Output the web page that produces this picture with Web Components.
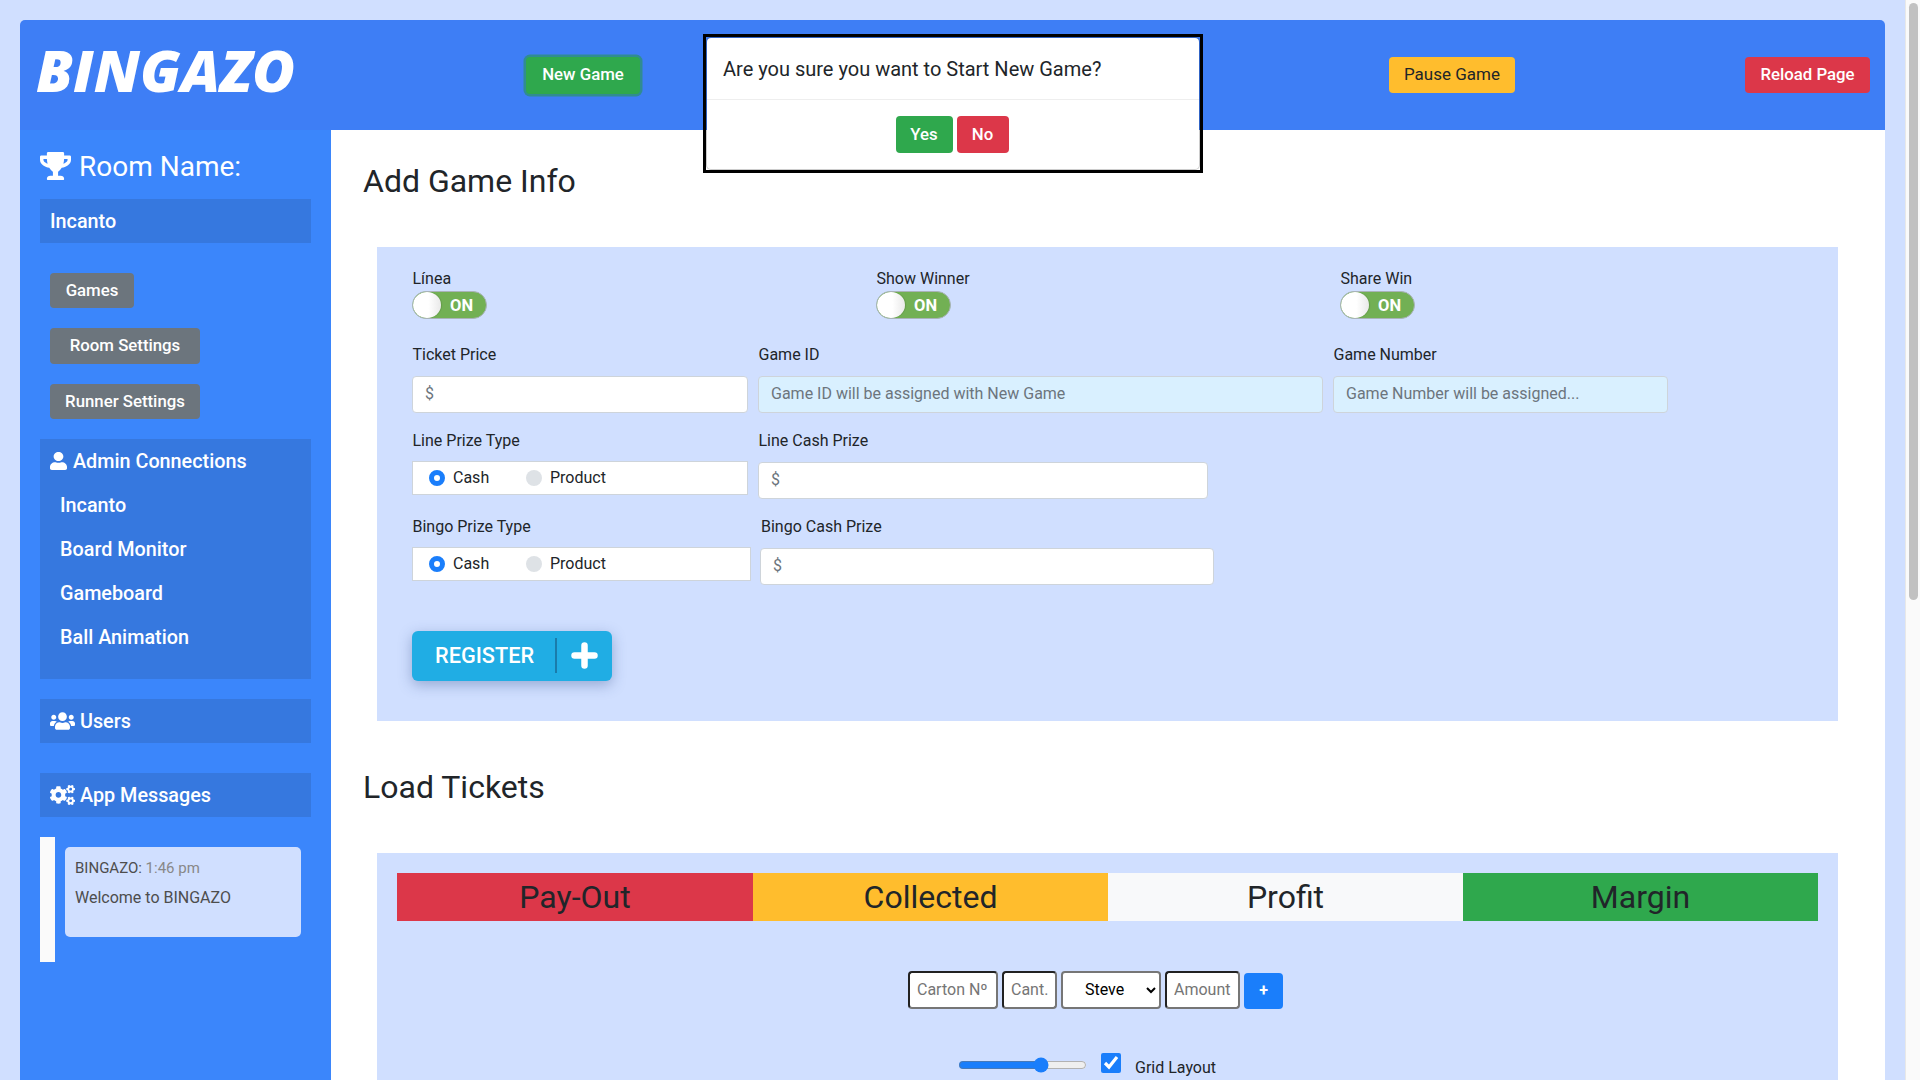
<!DOCTYPE html>
<html lang="en">
<head>
<meta charset="utf-8">
<title>BINGAZO</title>
<style>
html,body{margin:0;height:1080px;overflow:hidden;background:#d0dfff;font-family:Roboto,"Liberation Sans",sans-serif;color:#212529}
</style>
<script>
const def=(name,css,html,setup)=>customElements.define(name,class extends HTMLElement{
  constructor(){super();this.attachShadow({mode:'open'}).innerHTML=`<style>${css}</style>${html}`;}
  connectedCallback(){if(setup)setup(this);}
});
const ICONS={
 trophy:['0 0 576 512','M552 64H448V24c0-13.3-10.7-24-24-24H152c-13.3 0-24 10.7-24 24v40H24C10.7 64 0 74.7 0 88v56c0 35.7 22.5 72.4 61.9 100.7 31.5 22.7 69.8 37.1 110 41.7C203.3 338.5 240 360 240 360v72h-48c-35.3 0-64 20.7-64 56v12c0 6.6 5.4 12 12 12h296c6.6 0 12-5.4 12-12v-12c0-35.3-28.7-56-64-56h-48v-72s36.7-21.5 68.1-73.6c40.3-4.6 78.7-19 110-41.7 39.3-28.3 61.9-65 61.9-100.7V88c0-13.3-10.7-24-24-24zM99.3 192.8C74.9 175.2 64 155.6 64 144v-16h64.2c1 32.6 5.8 61.2 12.8 86.2-15.1-5.2-29.2-12.4-41.7-21.4zM512 144c0 16.1-17.7 36.1-35.3 48.8-12.5 9-26.7 16.2-41.8 21.4 7-25 11.8-53.6 12.8-86.2H512v16z'],
 user:['0 0 448 512','M224 256c70.7 0 128-57.3 128-128S294.7 0 224 0 96 57.3 96 128s57.3 128 128 128zm89.6 32h-16.7c-22.2 10.2-46.9 16-72.9 16s-50.6-5.8-72.9-16h-16.7C60.2 288 0 348.2 0 422.4V464c0 26.5 21.5 48 48 48h352c26.5 0 48-21.5 48-48v-41.6c0-74.2-60.2-134.4-134.4-134.4z'],
 users:['0 0 640 512','M96 224c35.3 0 64-28.7 64-64s-28.7-64-64-64-64 28.7-64 64 28.7 64 64 64zm448 0c35.3 0 64-28.7 64-64s-28.7-64-64-64-64 28.7-64 64 28.7 64 64 64zm32 32h-64c-17.6 0-33.5 7.1-45.1 18.6 40.3 22.1 68.9 62 75.1 109.4h66c17.7 0 32-14.3 32-32v-32c0-35.3-28.7-64-64-64zm-256 0c61.9 0 112-50.1 112-112S381.9 32 320 32 208 82.1 208 144s50.1 112 112 112zm76.8 32h-8.3c-20.8 10-43.9 16-68.5 16s-47.6-6-68.5-16h-8.3C179.6 288 128 339.6 128 403.2V432c0 26.5 21.5 48 48 48h288c26.5 0 48-21.5 48-48v-28.8c0-63.6-51.6-115.2-115.2-115.2zm-223.7-13.4C161.5 263.1 145.6 256 128 256H64c-35.3 0-64 28.7-64 64v32c0 17.7 14.3 32 32 32h65.9c6.3-47.4 34.9-87.3 75.2-109.4z'],
 cogs:['0 0 640 512','M512.1 191l-8.2 14.3c-3 5.3-9.4 7.5-15.1 5.4-11.8-4.4-22.6-10.7-32.1-18.6-4.6-3.8-5.8-10.5-2.8-15.7l8.2-14.3c-6.9-8-12.3-17.3-15.9-27.4h-16.5c-6 0-11.2-4.3-12.2-10.3-2-12-2.1-24.6 0-37.1 1-6 6.2-10.4 12.2-10.4h16.5c3.6-10.1 9-19.4 15.9-27.4l-8.2-14.3c-3-5.2-1.9-11.9 2.8-15.7 9.5-7.9 20.4-14.2 32.1-18.6 5.7-2.1 12.1.1 15.1 5.4l8.2 14.3c10.5-1.9 21.2-1.9 31.7 0L552 6.3c3-5.3 9.4-7.5 15.1-5.4 11.8 4.4 22.6 10.7 32.1 18.6 4.6 3.8 5.8 10.5 2.8 15.7l-8.2 14.3c6.9 8 12.3 17.3 15.9 27.4h16.5c6 0 11.2 4.3 12.2 10.3 2 12 2.1 24.6 0 37.1-1 6-6.2 10.4-12.2 10.4h-16.5c-3.6 10.1-9 19.4-15.9 27.4l8.2 14.3c3 5.2 1.9 11.9-2.8 15.7-9.5 7.9-20.4 14.2-32.1 18.6-5.7 2.1-12.1-.1-15.1-5.4l-8.2-14.3c-10.4 1.9-21.2 1.9-31.7 0zm-10.5-58.8c38.5 29.6 82.4-14.3 52.8-52.8-38.5-29.7-82.4 14.3-52.8 52.8zM386.3 286.1l33.7 16.8c10.1 5.8 14.5 18.1 10.5 29.1-8.9 24.2-26.4 46.4-42.6 65.8-7.4 8.9-20.2 11.1-30.3 5.3l-29.1-16.8c-16 13.7-34.6 24.6-54.9 31.7v33.6c0 11.6-8.3 21.6-19.7 23.6-24.6 4.2-50.4 4.4-75.9 0-11.5-2-20-11.9-20-23.6V418c-20.3-7.2-38.9-18-54.9-31.7L74 403c-10 5.8-22.9 3.6-30.3-5.3-16.2-19.4-33.3-41.6-42.2-65.7-4-10.9.4-23.2 10.5-29.1l33.3-16.8c-3.9-20.9-3.9-42.4 0-63.4L12 205.8c-10.1-5.8-14.6-18.1-10.5-29 8.9-24.2 26-46.4 42.2-65.8 7.4-8.9 20.2-11.1 30.3-5.3l29.1 16.8c16-13.7 34.6-24.6 54.9-31.7V57.1c0-11.5 8.2-21.5 19.6-23.5 24.6-4.2 50.5-4.4 76-.1 11.5 2 20 11.9 20 23.6v33.6c20.3 7.2 38.9 18 54.9 31.7l29.1-16.8c10-5.8 22.9-3.6 30.3 5.3 16.2 19.4 33.2 41.6 42.1 65.8 4 10.9.1 23.2-10 29.1l-33.7 16.8c3.9 21 3.9 42.5 0 63.5zm-117.6 21.1c59.2-77-28.7-164.9-105.7-105.7-59.2 77 28.7 164.9 105.7 105.7zm243.4 182.7l-8.2 14.3c-3 5.3-9.4 7.5-15.1 5.4-11.8-4.4-22.6-10.7-32.1-18.6-4.6-3.8-5.8-10.5-2.8-15.7l8.2-14.3c-6.9-8-12.3-17.3-15.9-27.4h-16.5c-6 0-11.2-4.3-12.2-10.3-2-12-2.1-24.6 0-37.1 1-6 6.2-10.4 12.2-10.4h16.5c3.6-10.1 9-19.4 15.9-27.4l-8.2-14.3c-3-5.2-1.9-11.9 2.8-15.7 9.5-7.9 20.4-14.2 32.1-18.6 5.7-2.1 12.1.1 15.1 5.4l8.2 14.3c10.5-1.9 21.2-1.9 31.7 0l8.2-14.3c3-5.3 9.4-7.5 15.1-5.4 11.8 4.4 22.6 10.7 32.1 18.6 4.6 3.8 5.8 10.5 2.8 15.7l-8.2 14.3c6.9 8 12.3 17.3 15.9 27.4h16.5c6 0 11.2 4.3 12.2 10.3 2 12 2.1 24.6 0 37.1-1 6-6.2 10.4-12.2 10.4h-16.5c-3.6 10.1-9 19.4-15.9 27.4l8.2 14.3c3 5.2 1.9 11.9-2.8 15.7-9.5 7.9-20.4 14.2-32.1 18.6-5.7 2.1-12.1-.1-15.1-5.4l-8.2-14.3c-10.4 1.9-21.2 1.9-31.7 0zM501.6 431c38.5 29.6 82.4-14.3 52.8-52.8-38.5-29.6-82.4 14.3-52.8 52.8z']
};
def('bz-icon',':host{display:inline-flex}svg{width:100%;height:100%;fill:currentColor;display:block}','',el=>{
  const [vb,d]=ICONS[el.getAttribute('name')];
  const s=el.shadowRoot; if(s.querySelector('svg'))return;
  s.innerHTML+=`<svg viewBox="${vb}" preserveAspectRatio="none" aria-hidden="true"><path d="${d}"/></svg>`;
});
def('bz-btn',`:host{display:inline-flex;align-items:center;justify-content:center;box-sizing:border-box;height:36px;padding-bottom:2px;border-radius:4px;color:#fff;font-size:16.8px;font-weight:500;white-space:nowrap}
:host([v=green]){background:#2fa84d}
:host([v=red]){background:#dc3749}
:host([v=yellow]){background:#ffbd2d;color:#212529;font-weight:400;font-size:17px}
:host([v=gray]){background:#6c757d}
:host([v=blue]){background:#1a7efb;font-weight:700;font-size:16px}
:host([focus]){height:37px;padding-bottom:4px;box-shadow:0 0 0 2.5px rgba(40,150,80,.6)}`,'<slot></slot>');
def('bz-app',`:host{display:block;box-sizing:border-box;width:1905px;height:1080px;padding:20px 20px 0;overflow:hidden}
.shell{display:grid;grid-template-columns:311px 1fr;grid-template-rows:110px 950px;width:1865px}
.top{grid-column:1/3;background:#3e7ef5;border-radius:5px 5px 0 0}
.side{background:#3b86fb}.main{background:#fff}`,
`<div class="shell"><div class="top"><slot name="header"></slot></div><div class="side"><slot name="side"></slot></div><div class="main"><slot name="main"></slot></div></div><slot></slot>`);
def('bz-header',`:host{display:grid;grid-template-columns:506px 863px 356px 125px;align-items:start;height:110px}
.logo{padding:20px 0 0 16px;color:#fff;white-space:nowrap}
.logo span{display:inline-block;font:italic 800 56px/60px "Open Sans",Lato,sans-serif;transform:scaleX(1.045);transform-origin:0 50%}
::slotted(bz-btn){margin-top:37px}
::slotted(bz-btn[v=green]){width:114px}
::slotted(bz-btn[v=yellow]){width:126px}
::slotted(bz-btn[v=red]){width:125px}`,
`<div class="logo"><span>BINGAZO</span></div><slot></slot>`);
def('bz-sidebar',`:host{display:block;padding:23px 20px 0;color:#fff}
.room{display:flex;align-items:center;gap:8px;height:28px;font-size:28px;line-height:28px}
bz-icon{width:31px;height:28px;margin-top:-2px}`,
`<div class="room"><bz-icon name="trophy"></bz-icon><span>Room Name:</span></div><slot></slot>`);
def('bz-bar',`:host{display:flex;align-items:center;gap:5px;box-sizing:border-box;height:44px;padding:0 10px;background:#3678df;color:#fff;font-size:19.8px;font-weight:500;white-space:nowrap}`,'<slot></slot>');
def('bz-sidebtns',`:host{display:flex;flex-direction:column;align-items:flex-start;gap:20px;padding:30px 0 0 10px}`,'<slot></slot>');
def('bz-connections',`:host{display:block;box-sizing:border-box;height:240px;margin-top:20px;background:#3678df;color:#fff;font-size:19.8px;font-weight:500}
.h{display:flex;align-items:center;gap:6px;height:45px;padding:0 10px 1px;box-sizing:border-box}
bz-icon{width:17px;height:18px}
.list{display:flex;flex-direction:column}
::slotted(div){height:44px;line-height:44px;padding-left:20px}`,
`<div class="h"><bz-icon name="user"></bz-icon><span>Admin Connections</span></div><div class="list"><slot></slot></div>`);
def('bz-messages',`:host{display:flex;box-sizing:border-box;height:125px;margin-top:20px}
.strip{width:15px;background:#fafafa;flex:none}
.wrap{padding:10px 0 0 10px}
.bubble{box-sizing:border-box;width:236px;height:90px;background:#d0dfff;border-radius:5px;padding:11px 10px;color:#4d4d4d;font-size:15px}
.meta{height:20px;line-height:20px}.meta span{color:#888}
.txt{margin-top:10px;height:20px;line-height:20px;font-size:16px}`,
`<div class="strip"></div><div class="wrap"><div class="bubble"><div class="meta">BINGAZO: <span>1:46 pm</span></div><div class="txt">Welcome to BINGAZO</div></div></div>`);
def('bz-main',`:host{display:block;padding:32px 47px 0 32px}
::slotted(h2){margin:0;font-size:32px;font-weight:400;line-height:38px;color:#212529}`,'<slot></slot>');
def('bz-section',`:host{display:block;box-sizing:border-box;background:#d0dfff;margin-left:14px}`,'<slot></slot>');
def('bz-row',`:host{display:flex;gap:10px;align-items:flex-start}`,'<slot></slot>');
def('bz-field',`:host{display:block;flex:none;font-size:16px}
.l{height:20px;line-height:20px;color:#212529;white-space:nowrap;margin-bottom:var(--gap,11px);margin-left:.5px}
:host([shift]) .l{margin-left:1px}`,
`<div class="l"><slot name="label"></slot></div><slot></slot>`);
def('bz-toggle',`:host{display:block;position:relative;box-sizing:border-box;width:75px;height:28px;border-radius:14px;background:#72b054;border:1px solid #a9b3b8;overflow:hidden}
.k{display:block;width:28px;height:26px;border-radius:50%;background:linear-gradient(90deg,#fff 55%,#e9e9e9);box-shadow:1px 0 1px rgba(0,0,0,.12)}
.t{position:absolute;left:37px;top:1px;line-height:26px;font-size:16.5px;font-weight:700;color:#fff}`,
`<span class="k"></span><span class="t">ON</span>`);
def('bz-input',`:host{display:block;height:37px}
input{display:block;box-sizing:border-box;width:100%;height:100%;border:1px solid #ced4da;border-radius:4px;background:var(--bg,#fff);padding:0 12px 2px;font:16px Roboto,sans-serif;color:#495057;outline:0}
input::placeholder{color:#6c757d;opacity:1}`,'<input>',el=>{
  const i=el.shadowRoot.querySelector('input');i.placeholder=el.getAttribute('ph')||'';
  if(el.hasAttribute('ro'))i.readOnly=true;
});
def('bz-radios',`:host{display:flex;align-items:center;box-sizing:border-box;height:34px;background:#fff;border:1px solid #ced4da;font-size:16px;color:#212529;padding-left:16px;padding-bottom:1px}
.r{width:16px;height:16px;border-radius:50%;background:#dee2e6;flex:none;margin-right:8px}
.r.on{background:#fff;border:5px solid #1a7efb;box-sizing:border-box}
.c{width:73px}`,
`<span class="r on"></span><span class="c">Cash</span><span class="r"></span><span>Product</span>`);
def('bz-register',`:host{display:inline-flex;align-items:center;box-sizing:border-box;width:200px;height:50px;padding-bottom:2px;background:#20ade4;border-radius:6px;color:#fff;font-size:21.7px;font-weight:500;padding-left:23px;box-shadow:0 4px 14px rgba(40,70,130,.35);position:relative}
.t{width:99px}
.sep{width:2px;height:35px;background:#1a7cab;margin-left:21px}
svg{width:27px;height:27px;margin-left:14px;flex:none}`,
`<span class="t"><slot></slot></span><span class="sep"></span><svg viewBox="0 0 27 27"><path d="M13.5 3.5v20M3.5 13.5h20" stroke="#fff" stroke-width="6.5" stroke-linecap="round"/></svg>`);
def('bz-stats',`:host{display:grid;grid-template-columns:356px 355px 355px 355px;height:48px;margin:0 20px}
::slotted(div){font-size:32px;line-height:48px;text-align:center;color:#212529}`,'<slot></slot>');
def('bz-loader',`:host{display:flex;justify-content:center;align-items:flex-start;gap:4px;margin-top:50px;margin-right:24px}
input,select{box-sizing:border-box;height:38px;background:#fff;border:2px solid;border-color:#222 #767676 #767676 #222;border-radius:4px;font:16px Roboto,sans-serif;padding:0 7px 2px;outline:0;color:#000}
input::placeholder{color:#757575;opacity:1}
.a{width:90px}.b{width:55px}.d{width:75px}
select{width:100px;padding-left:18px;border-color:#767676}
bz-btn{width:39px;height:36px;margin-top:2px;font-size:16px}`,
`<input class="a" placeholder="Carton Nº"><input class="b" placeholder="Cant."><select><option>Steve</option></select><input class="d" placeholder="Amount"><bz-btn v="blue">+</bz-btn>`);
def('bz-layout',`:host{display:flex;align-items:flex-start;margin-top:44px;margin-left:581px;font-size:16px}
input[type=range]{width:129px;height:16px;margin:4px 0 0;accent-color:#1a7efb}
input[type=checkbox]{width:20px;height:20px;margin:0 0 0 14px;accent-color:#1a7efb}
span{margin:5px 0 0 14px;line-height:20px;white-space:nowrap}`,
`<input type="range" value="66"><input type="checkbox" checked><span>Grid Layout</span>`);
def('bz-modal',`:host{position:absolute;left:703px;top:34px;width:500px;height:139px;box-sizing:border-box;border:3px solid #000;display:block}
.c{box-sizing:border-box;height:100%;background:#fff;border:1px solid rgba(0,0,0,.2);border-radius:5px;background-clip:padding-box}
.m{height:62px;box-sizing:border-box;border-bottom:1px solid #eee;padding:0 16px;display:flex;align-items:center;font-size:20px;color:#212529;white-space:nowrap}
.f{display:flex;justify-content:center;gap:4px;padding:16px 2px 0 0}
bz-btn{height:37px;font-weight:500}
.y{width:57px}.n{width:52px}`,
`<div class="c"><div class="m"><slot></slot></div><div class="f"><bz-btn class="y" v="green">Yes</bz-btn><bz-btn class="n" v="red">No</bz-btn></div></div>`);
def('bz-scrollbar',`:host{position:absolute;left:1905px;top:0;width:15px;height:1080px;background:#fafafa;border-left:1px solid #e8e8e8;box-sizing:border-box}
div{position:absolute;left:3px;top:3px;width:9px;height:597px;border-radius:5px;background:#c1c1c1}`,'<div></div>');
</script>
</head>
<body>
<bz-app>
  <bz-header slot="header">
    <bz-btn v="green" focus>New Game</bz-btn>
    <bz-btn v="yellow">Pause Game</bz-btn>
    <bz-btn v="red">Reload Page</bz-btn>
  </bz-header>
  <bz-sidebar slot="side">
    <bz-bar style="margin-top:18px">Incanto</bz-bar>
    <bz-sidebtns>
      <bz-btn v="gray" style="width:84px;height:35px">Games</bz-btn>
      <bz-btn v="gray" style="width:150px">Room Settings</bz-btn>
      <bz-btn v="gray" style="width:150px;height:35px">Runner Settings</bz-btn>
    </bz-sidebtns>
    <bz-connections>
      <div>Incanto</div><div>Board Monitor</div><div>Gameboard</div><div>Ball Animation</div>
    </bz-connections>
    <bz-bar style="margin-top:20px"><bz-icon name="users" style="width:25px;height:20px"></bz-icon>Users</bz-bar>
    <bz-bar style="margin-top:30px"><bz-icon name="cogs" style="width:25px;height:20px"></bz-icon>App Messages</bz-bar>
    <bz-messages></bz-messages>
  </bz-sidebar>
  <bz-main slot="main">
    <h2>Add Game Info</h2>
    <bz-section style="margin-top:47px;height:474px;padding:22px 0 0 35px">
      <bz-row style="gap:0">
        <bz-field style="width:464px;--gap:2px"><span slot="label">Línea</span><bz-toggle></bz-toggle></bz-field>
        <bz-field style="width:464px;--gap:2px"><span slot="label">Show Winner</span><bz-toggle></bz-toggle></bz-field>
        <bz-field style="width:464px;--gap:2px"><span slot="label">Share Win</span><bz-toggle></bz-toggle></bz-field>
      </bz-row>
      <bz-row style="margin-top:26px">
        <bz-field style="width:336px"><span slot="label">Ticket Price</span><bz-input ph="$"></bz-input></bz-field>
        <bz-field style="width:565px"><span slot="label">Game ID</span><bz-input ro ph="Game ID will be assigned with New Game" style="--bg:#d9f0ff"></bz-input></bz-field>
        <bz-field style="width:335px"><span slot="label">Game Number</span><bz-input ro ph="Game Number will be assigned..." style="--bg:#d9f0ff"></bz-input></bz-field>
      </bz-row>
      <bz-row style="margin-top:18px">
        <bz-field style="width:336px;--gap:10px"><span slot="label">Line Prize Type</span><bz-radios></bz-radios></bz-field>
        <bz-field style="width:450px;--gap:11px"><span slot="label">Line Cash Prize</span><bz-input ph="$"></bz-input></bz-field>
      </bz-row>
      <bz-row style="margin-top:18px">
        <bz-field style="width:339px;--gap:10px"><span slot="label">Bingo Prize Type</span><bz-radios></bz-radios></bz-field>
        <bz-field shift style="width:454px;--gap:11px;margin-left:-1px"><span slot="label">Bingo Cash Prize</span><bz-input ph="$"></bz-input></bz-field>
      </bz-row>
      <bz-register style="margin-top:46px">REGISTER</bz-register>
    </bz-section>
    <h2 style="margin-top:47px">Load Tickets</h2>
    <bz-section style="margin-top:47px;height:240px;padding-top:20px">
      <bz-stats>
        <div style="background:#dc3749">Pay-Out</div>
        <div style="background:#ffbd2d">Collected</div>
        <div style="background:#f8f9fa">Profit</div>
        <div style="background:#2fa84d">Margin</div>
      </bz-stats>
      <bz-loader></bz-loader>
      <bz-layout></bz-layout>
    </bz-section>
  </bz-main>
  <bz-modal>Are you sure you want to Start New Game?</bz-modal>
</bz-app>
<bz-scrollbar></bz-scrollbar>
</body>
</html>
